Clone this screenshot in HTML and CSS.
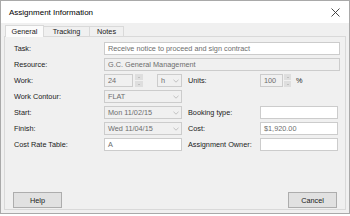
FILE: index.html
```html
<!DOCTYPE html>
<html>
<head>
<meta charset="utf-8">
<link rel="stylesheet" href="styles.css">
</head>
<body>
<div class="win">
  <div class="titlebar">
    <span class="title">Assignment Information</span>
    <svg class="close" width="9" height="9" viewBox="0 0 9 9"><path d="M0.5 0.5 L8.5 8.5 M8.5 0.5 L0.5 8.5" stroke="#333" stroke-width="0.9" fill="none"/></svg>
  </div>
  <div class="tabs">
    <div class="tab sel t-general">General</div>
    <div class="tab t-tracking">Tracking</div>
    <div class="tab t-notes">Notes</div>
  </div>
  <div class="panel">
    <div class="rows">
      <div class="row">
        <span class="lbl">Task:</span>
        <div class="field white grow">Receive notice to proceed and sign contract</div>
      </div>
      <div class="row">
        <span class="lbl">Resource:</span>
        <div class="field grow">G.C. General Management</div>
      </div>
      <div class="row">
        <span class="lbl">Work:</span>
        <div class="field num-work">24</div>
        <div class="spin"><span class="up"></span><span class="dn"></span></div>
        <div class="combo combo-h"><span class="ctext">h</span><svg class="chev" width="6" height="4" viewBox="0 0 6 4"><path d="M0.5 0.8 L3 3.2 L5.5 0.8" stroke="#b4b4b4" stroke-width="0.8" fill="none"/></svg></div>
        <span class="lbl2">Units:</span>
        <div class="field num-units">100</div>
        <div class="spin spin-u"><span class="up"></span><span class="dn"></span></div>
        <span class="pct">%</span>
      </div>
      <div class="row">
        <span class="lbl">Work Contour:</span>
        <div class="combo combo-w"><span class="ctext">FLAT</span><svg class="chev" width="6" height="4" viewBox="0 0 6 4"><path d="M0.5 0.8 L3 3.2 L5.5 0.8" stroke="#b4b4b4" stroke-width="0.8" fill="none"/></svg></div>
      </div>
      <div class="row">
        <span class="lbl">Start:</span>
        <div class="combo combo-w"><span class="ctext">Mon 11/02/15</span><svg class="chev" width="6" height="4" viewBox="0 0 6 4"><path d="M0.5 0.8 L3 3.2 L5.5 0.8" stroke="#b4b4b4" stroke-width="0.8" fill="none"/></svg></div>
        <span class="lbl2">Booking type:</span>
        <div class="field white rfield"></div>
      </div>
      <div class="row">
        <span class="lbl">Finish:</span>
        <div class="combo combo-w"><span class="ctext">Wed 11/04/15</span><svg class="chev" width="6" height="4" viewBox="0 0 6 4"><path d="M0.5 0.8 L3 3.2 L5.5 0.8" stroke="#b4b4b4" stroke-width="0.8" fill="none"/></svg></div>
        <span class="lbl2">Cost:</span>
        <div class="field white rfield">$1,920.00</div>
      </div>
      <div class="row">
        <span class="lbl">Cost Rate Table:</span>
        <div class="field white combo-w">A</div>
        <span class="lbl2">Assignment Owner:</span>
        <div class="field white rfield"></div>
      </div>
    </div>
    <div class="footer">
      <div class="btn">Help</div>
      <div class="btn">Cancel</div>
    </div>
  </div>
</div>
</body>
</html>
```
FILE: styles.css
```css
html, body {
  margin: 0;
  padding: 0;
  background: #ffffff;
}
body {
  width: 350px;
  height: 216px;
  font-family: "Liberation Sans", Arial, sans-serif;
  font-size: 7.3px;
  color: #1a1a1a;
}
.win {
  width: 350px;
  height: 214px;
  box-sizing: border-box;
  border: 1px solid #a9a9a9;
  background: #f0f0f0;
  display: flex;
  flex-direction: column;
}
.titlebar {
  height: 22px;
  flex: none;
  background: #ffffff;
  display: flex;
  align-items: center;
  justify-content: space-between;
  padding: 0 9px 0 8px;
}
.title {
  font-size: 8px;
  color: #000;
}
.close {
  display: block;
}
.tabs {
  display: flex;
  align-items: flex-end;
  height: 11px;
  margin: 2px 3px 0 3px;
  padding-left: 1px;
  position: relative;
  z-index: 1;
}
.tab {
  box-sizing: border-box;
  height: 10px;
  border: 1px solid #d9d9d9;
  border-bottom: none;
  background: #f0f0f0;
  display: flex;
  align-items: center;
  justify-content: center;
  line-height: 9px;
  color: #1a1a1a;
}
.tab.sel {
  height: 12px;
  margin-bottom: -1px;
  background: #fbfbfb;
}
.t-general { width: 39px; }
.t-tracking { width: 47px; margin-left: -1px; }
.t-notes { width: 35px; margin-left: -1px; }
.panel {
  flex: none;
  height: 174px;
  box-sizing: border-box;
  margin: 0 3px;
  border: 1px solid #d9d9d9;
  background: #f0f0f0;
  padding: 5px 5px 1px 9px;
  display: flex;
  flex-direction: column;
}
.rows {
  display: flex;
  flex-direction: column;
  gap: 3px;
}
.row {
  display: flex;
  align-items: center;
  height: 13px;
}
.lbl {
  width: 90px;
  flex: none;
  padding-left: 0;
}
.lbl2 {
  width: 72px;
  flex: none;
  margin-left: 6px;
}
.field {
  box-sizing: border-box;
  height: 13px;
  border: 1px solid #cccccc;
  background: #f0f0f0;
  color: #6d6d6d;
  padding-left: 3px;
  line-height: 11px;
  white-space: nowrap;
  overflow: hidden;
  flex: none;
}
.field.white {
  background: #ffffff;
}
.grow {
  flex: 1;
}
.num-work { width: 29px; }
.num-units { width: 23px; }
.rfield { width: 78px; }
.combo-w { width: 78px; }
.spin {
  box-sizing: border-box;
  width: 8px;
  height: 13px;
  margin-left: 2px;
  display: flex;
  flex-direction: column;
  gap: 1px;
  flex: none;
}
.spin-u {
  width: 7px;
  margin-left: 1px;
}
.spin span {
  flex: 1;
  background: #dedede;
  display: flex;
  align-items: center;
  justify-content: center;
}
.spin .up::after {
  content: "";
  border-left: 1.5px solid transparent;
  border-right: 1.5px solid transparent;
  border-bottom: 1.5px solid #a0a0a0;
}
.spin .dn::after {
  content: "";
  border-left: 1.5px solid transparent;
  border-right: 1.5px solid transparent;
  border-top: 1.5px solid #a0a0a0;
}
.combo {
  box-sizing: border-box;
  height: 13px;
  border: 1px solid #cccccc;
  background: #f0f0f0;
  color: #6d6d6d;
  display: flex;
  align-items: center;
  justify-content: space-between;
  padding: 0 2px 0 3px;
  flex: none;
}
.combo-h {
  width: 25px;
  margin-left: 14px;
}
.ctext {
  line-height: 11px;
}
.chev {
  display: block;
}
.pct {
  margin-left: 5px;
  color: #1a1a1a;
}
.footer {
  margin-top: auto;
  margin-left: -1px;
  margin-right: 3px;
  display: flex;
  justify-content: space-between;
}
.btn {
  box-sizing: border-box;
  width: 49px;
  height: 16px;
  border: 1px solid #adadad;
  background: #e1e1e1;
  display: flex;
  align-items: center;
  justify-content: center;
  color: #1a1a1a;
}
```
